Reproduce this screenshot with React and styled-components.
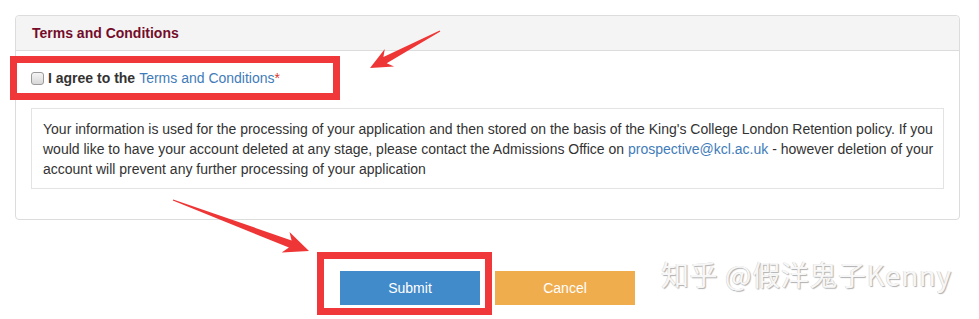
import React from "react";
import styled, { createGlobalStyle } from "styled-components";

const Global = createGlobalStyle`
  html, body { margin: 0; padding: 0; background: #fff; }
  body { font-family: "Liberation Sans", Arial, sans-serif; color: #333; }
`;

const Page = styled.div`
  position: relative;
  width: 979px;
  height: 319px;
  overflow: hidden;
  padding: 15px 0 0 15px;
  box-sizing: border-box;
`;

const Panel = styled.section`
  width: 945px;
  box-sizing: border-box;
  border: 1px solid #dcdcdc;
  border-radius: 4px;
  background: #fff;
`;

const PanelHeader = styled.header`
  display: flex;
  align-items: center;
  height: 34px;
  padding: 0 16px;
  background: #f4f4f4;
  border-bottom: 1px solid #dcdcdc;
  border-radius: 4px 4px 0 0;
`;

const Title = styled.h3`
  margin: 0;
  font-size: 14px;
  font-weight: bold;
  color: #740c2a;
`;

const PanelBody = styled.div`
  padding: 15px 15px 30px 15px;
`;

const AgreeRow = styled.label`
  display: flex;
  align-items: center;
  height: 24px;
  font-size: 14px;
  color: #333;
`;

const Check = styled.input`
  appearance: none;
  -webkit-appearance: none;
  box-sizing: border-box;
  width: 13px;
  height: 13px;
  margin: 0 4px 0 0;
  border: 1px solid #9a9a9a;
  border-radius: 3px;
  background: linear-gradient(#f4f4f4, #d8d8d8);
`;

const Strong = styled.b`
  font-weight: bold;
  margin-right: 4px;
`;

const Link = styled.a`
  color: #3f7cb9;
  text-decoration: none;
`;

const Required = styled.span`
  color: #d9372f;
`;

const Well = styled.div`
  margin-top: 18px;
  border: 1px solid #e3e3e3;
  padding: 10px 8px 9px 11px;
  font-size: 14px;
  line-height: 20px;
  color: #333;
`;

const Actions = styled.div`
  display: flex;
  justify-content: center;
  gap: 15px;
  width: 945px;
  margin-top: 51px;
`;

const Button = styled.button`
  width: 140px;
  height: 34px;
  border: none;
  border-radius: 0;
  font-family: "Liberation Sans", Arial, sans-serif;
  font-size: 14px;
  color: #fff;
  background: ${(p) => (p.$variant === "cancel" ? "#f0ad4e" : "#428bca")};
  cursor: pointer;
`;

const Highlight = styled.div`
  position: absolute;
  box-sizing: border-box;
  border: 7px solid #f0383b;
`;

const Arrows = styled.svg`
  position: absolute;
  left: 0;
  top: 0;
  pointer-events: none;
`;

const Watermark = styled.div`
  position: absolute;
  left: 661px;
  top: 255px;
  font-family: "Noto Sans CJK SC", "Noto Sans", sans-serif;
  font-size: 28px;
  letter-spacing: 0.6px;
  line-height: 38px;
  color: #f7f7f7;
  text-shadow: 1px 1px 1px #b0b0b0, -0.5px -0.5px 0 #d6d6d6;
  white-space: nowrap;
  pointer-events: none;
`;

function arrowPoints(tail, tip, headLen, headHalf, shaftHalf, tailHalf) {
  const dx = tip[0] - tail[0];
  const dy = tip[1] - tail[1];
  const len = Math.hypot(dx, dy);
  const ux = dx / len, uy = dy / len;
  const nx = -uy, ny = ux;
  const bx = tip[0] - ux * headLen, by = tip[1] - uy * headLen;
  const jx = bx + ux * 5, jy = by + uy * 5;
  const pts = [
    [tail[0] + nx * tailHalf, tail[1] + ny * tailHalf],
    [jx + nx * shaftHalf, jy + ny * shaftHalf],
    [bx + nx * headHalf, by + ny * headHalf],
    tip,
    [bx - nx * headHalf, by - ny * headHalf],
    [jx - nx * shaftHalf, jy - ny * shaftHalf],
    [tail[0] - nx * tailHalf, tail[1] - ny * tailHalf],
  ];
  return pts.map((p) => `${p[0].toFixed(1)},${p[1].toFixed(1)}`).join(" ");
}

export default function App() {
  return (
    <>
      <Global />
      <Page>
        <Panel>
          <PanelHeader>
            <Title>Terms and Conditions</Title>
          </PanelHeader>
          <PanelBody>
            <AgreeRow>
              <Check type="checkbox" />
              <Strong>I agree to the</Strong>
              <Link href="#">Terms and Conditions</Link>
              <Required>*</Required>
            </AgreeRow>
            <Well>
              Your information is used for the processing of your application and then stored on the basis of the King's College London Retention policy. If you would like to have your account deleted at any stage, please contact the Admissions Office on{" "}
              <Link href="#">prospective@kcl.ac.uk</Link> - however deletion of your account will prevent any further processing of your application
            </Well>
          </PanelBody>
        </Panel>
        <Actions>
          <Button type="button">Submit</Button>
          <Button type="button" $variant="cancel">Cancel</Button>
        </Actions>

        <Highlight style={{ left: 10, top: 56, width: 330, height: 44 }} />
        <Highlight style={{ left: 317, top: 252, width: 175, height: 63 }} />
        <Arrows width="979" height="319" viewBox="0 0 979 319">
          <polygon fill="#ef3636" points={arrowPoints([440, 31], [370, 68], 22, 10, 3.5, 0.6)} />
          <polygon fill="#ef3636" points={arrowPoints([173, 200], [309, 251], 25, 11, 3.8, 0.6)} />
        </Arrows>
        <Watermark>知乎 @假洋鬼子Kenny</Watermark>
      </Page>
    </>
  );
}
